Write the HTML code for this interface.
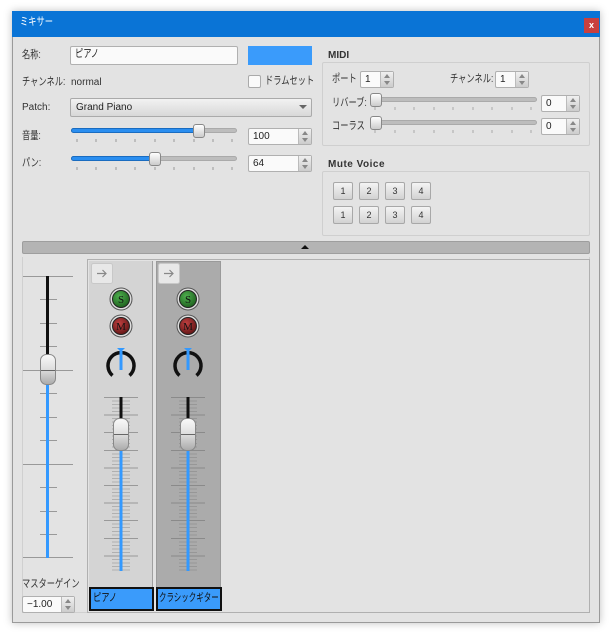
<!DOCTYPE html>
<html><head><meta charset="utf-8"><style>
*{box-sizing:border-box;margin:0;padding:0}
body{width:613px;height:635px;background:#fff;position:relative;overflow:hidden;font-family:"Liberation Sans","Noto Sans CJK JP",sans-serif;font-size:10px;color:#222}
.a{position:absolute;white-space:nowrap}
.j{display:inline-block;transform:scaleX(.75);transform-origin:left center;font-size:11px;line-height:13px}
.win{left:12px;top:11px;width:588px;height:612px;background:#e3e3e3;border:1px solid #9a9a9a;box-shadow:0 0 8px rgba(0,0,0,.25)}
.title{left:12px;top:11px;width:588px;height:26px;background:#0a74d6;color:#fff;font-size:10px;padding:6px 0 0 8px}
.close{left:584px;top:18px;width:15px;height:15px;background:#c8403f;color:#fff;font-size:9px;text-align:center;line-height:14px;font-weight:bold}
.lbl{font-size:10px;color:#333;line-height:13px}
.inp{background:#fafafa;border:1px solid #b0b0b0;border-radius:2px;padding:2px 4px;font-size:10px}
.spin{background:#fafafa;border:1px solid #b0b0b0;border-radius:2px;padding:2px 4px;font-size:10px;line-height:12px}
.spin:after{content:"";position:absolute;right:0;top:0;bottom:0;width:12px;background:linear-gradient(#f0f0f0,#ccc);border-left:1px solid #bbb}
.spin i{position:absolute;right:3px;width:0;height:0;border-left:3px solid transparent;border-right:3px solid transparent;z-index:2}
.spin i.u{top:2px;border-bottom:4px solid #888}
.spin i.d{bottom:2px;border-top:4px solid #888}
.track{height:5px;background:#bdbdbd;border-radius:3px;border:1px solid #aaa}
.fill{height:5px;background:#2a8ef0;border-radius:3px;border:1px solid #1a6cc0}
.thumb{width:12px;height:14px;background:linear-gradient(#fff,#ccc);border:1px solid #888;border-radius:3px}
.grp{border:1px solid #cfcfcf;border-radius:2px}
.btn{width:20px;height:18px;background:linear-gradient(#f4f4f4,#d2d2d2);border:1px solid #a8a8a8;border-radius:2px;text-align:center;line-height:16px;font-size:9px;color:#333}
.h{font-weight:bold;font-size:10px;color:#333}
.maj{height:174px;background:repeating-linear-gradient(to bottom,#999 0,#999 1px,transparent 1px,transparent 17.6px)}
.min{height:174px;background:repeating-linear-gradient(to bottom,#b0b0b0 0,#b0b0b0 1px,transparent 1px,transparent 3.52px)}
.maj2{height:174px;background:repeating-linear-gradient(to bottom,#8a8a8a 0,#8a8a8a 1px,transparent 1px,transparent 17.6px)}
.min2{height:174px;background:repeating-linear-gradient(to bottom,#979797 0,#979797 1px,transparent 1px,transparent 3.52px)}
</style></head><body>
<div class="a win"></div>
<div class="a title" style="padding-top:5px"><span class="j">ミキサー</span></div>
<div class="a close">x</div>

<div class="a lbl" style="left:22px;top:49px"><span class="j">名称:</span></div>
<div class="a inp" style="left:70px;top:46px;width:168px;height:19px;padding-top:1px"><span class="j">ピアノ</span></div>
<div class="a" style="left:248px;top:46px;width:64px;height:19px;background:#3a9bfb"></div>
<div class="a lbl" style="left:22px;top:76px"><span class="j">チャンネル:</span></div>
<div class="a lbl" style="left:71px;top:76px">normal</div>
<div class="a" style="left:248px;top:75px;width:13px;height:13px;background:#fafafa;border:1px solid #aaa;border-radius:2px"></div>
<div class="a lbl" style="left:265px;top:75px"><span class="j">ドラムセット</span></div>
<div class="a lbl" style="left:22px;top:101px">Patch:</div>
<div class="a" style="left:70px;top:98px;width:242px;height:19px;background:linear-gradient(#f2f2f2,#d8d8d8);border:1px solid #aaa;border-radius:2px;padding:3px 5px;font-size:10px">Grand Piano</div>
<div class="a" style="left:299px;top:105px;border-left:4px solid transparent;border-right:4px solid transparent;border-top:4px solid #666"></div>

<div class="a lbl" style="left:22px;top:130px"><span class="j">音量:</span></div>
<div class="a track" style="left:71px;top:128px;width:166px"></div>
<div class="a fill" style="left:71px;top:128px;width:130px"></div>
<div class="a thumb" style="left:193px;top:124px"></div>
<svg class="a" style="left:70px;top:138px" width="170" height="8"><g stroke="#999"><line x1="7" y1="1" x2="7" y2="4"/><line x1="26" y1="1" x2="26" y2="4"/><line x1="46" y1="1" x2="46" y2="4"/><line x1="65" y1="1" x2="65" y2="4"/><line x1="85" y1="1" x2="85" y2="4"/><line x1="104" y1="1" x2="104" y2="4"/><line x1="124" y1="1" x2="124" y2="4"/><line x1="143" y1="1" x2="143" y2="4"/><line x1="162" y1="1" x2="162" y2="4"/></g></svg>
<div class="a spin" style="left:248px;top:128px;width:64px;height:17px">100<i class="u"></i><i class="d"></i></div>

<div class="a lbl" style="left:22px;top:157px"><span class="j">パン:</span></div>
<div class="a track" style="left:71px;top:156px;width:166px"></div>
<div class="a fill" style="left:71px;top:156px;width:86px"></div>
<div class="a thumb" style="left:149px;top:152px"></div>
<svg class="a" style="left:70px;top:166px" width="170" height="8"><g stroke="#999"><line x1="7" y1="1" x2="7" y2="4"/><line x1="26" y1="1" x2="26" y2="4"/><line x1="46" y1="1" x2="46" y2="4"/><line x1="65" y1="1" x2="65" y2="4"/><line x1="85" y1="1" x2="85" y2="4"/><line x1="104" y1="1" x2="104" y2="4"/><line x1="124" y1="1" x2="124" y2="4"/><line x1="143" y1="1" x2="143" y2="4"/><line x1="162" y1="1" x2="162" y2="4"/></g></svg>
<div class="a spin" style="left:248px;top:155px;width:64px;height:17px">64<i class="u"></i><i class="d"></i></div>

<!-- MIDI -->
<div class="a grp" style="left:322px;top:62px;width:268px;height:84px"></div>
<div class="a h" style="left:328px;top:50px;background:#e3e3e3;padding-right:6px">MIDI</div>
<div class="a lbl" style="left:332px;top:73px"><span class="j">ポート</span></div>
<div class="a spin" style="left:360px;top:71px;width:34px;height:17px">1<i class="u"></i><i class="d"></i></div>
<div class="a lbl" style="left:450px;top:73px"><span class="j">チャンネル:</span></div>
<div class="a spin" style="left:495px;top:71px;width:34px;height:17px">1<i class="u"></i><i class="d"></i></div>
<div class="a lbl" style="left:332px;top:97px"><span class="j">リバーブ:</span></div>
<div class="a track" style="left:371px;top:97px;width:166px"></div>
<div class="a thumb" style="left:370px;top:93px"></div>
<svg class="a" style="left:370px;top:106px" width="170" height="6"><g stroke="#aaa"><line x1="5" y1="1" x2="5" y2="4"/><line x1="25" y1="1" x2="25" y2="4"/><line x1="44" y1="1" x2="44" y2="4"/><line x1="64" y1="1" x2="64" y2="4"/><line x1="83" y1="1" x2="83" y2="4"/><line x1="103" y1="1" x2="103" y2="4"/><line x1="122" y1="1" x2="122" y2="4"/><line x1="142" y1="1" x2="142" y2="4"/><line x1="161" y1="1" x2="161" y2="4"/></g></svg>
<div class="a spin" style="left:541px;top:95px;width:39px;height:17px">0<i class="u"></i><i class="d"></i></div>
<div class="a lbl" style="left:332px;top:120px"><span class="j">コーラス</span></div>
<div class="a track" style="left:371px;top:120px;width:166px"></div>
<div class="a thumb" style="left:370px;top:116px"></div>
<svg class="a" style="left:370px;top:129px" width="170" height="6"><g stroke="#aaa"><line x1="5" y1="1" x2="5" y2="4"/><line x1="25" y1="1" x2="25" y2="4"/><line x1="44" y1="1" x2="44" y2="4"/><line x1="64" y1="1" x2="64" y2="4"/><line x1="83" y1="1" x2="83" y2="4"/><line x1="103" y1="1" x2="103" y2="4"/><line x1="122" y1="1" x2="122" y2="4"/><line x1="142" y1="1" x2="142" y2="4"/><line x1="161" y1="1" x2="161" y2="4"/></g></svg>
<div class="a spin" style="left:541px;top:118px;width:39px;height:17px">0<i class="u"></i><i class="d"></i></div>

<!-- Mute voice -->
<div class="a grp" style="left:322px;top:171px;width:268px;height:65px"></div>
<div class="a h" style="left:328px;top:159px;background:#e3e3e3;padding-right:6px;letter-spacing:.5px">Mute Voice</div>
<div class="a btn" style="left:333px;top:182px">1</div><div class="a btn" style="left:359px;top:182px">2</div><div class="a btn" style="left:385px;top:182px">3</div><div class="a btn" style="left:411px;top:182px">4</div>
<div class="a btn" style="left:333px;top:206px">1</div><div class="a btn" style="left:359px;top:206px">2</div><div class="a btn" style="left:385px;top:206px">3</div><div class="a btn" style="left:411px;top:206px">4</div>

<div class="a" style="left:22px;top:241px;width:568px;height:13px;background:#b4b4b4;border:1px solid #9e9e9e;border-radius:2px"></div>
<div class="a" style="left:301px;top:245px;border-left:4px solid transparent;border-right:4px solid transparent;border-bottom:4px solid #111"></div>

<div class="a" style="left:22px;top:257px;width:568px;height:356px;border:1px solid #d0d0d0;border-top:none"></div>

<!-- master fader -->
<svg class="a" style="left:20px;top:270px" width="60" height="295">
<defs><linearGradient id="tg" x1="0" x2="0" y1="0" y2="1"><stop offset="0" stop-color="#fafafa"/><stop offset=".5" stop-color="#ddd"/><stop offset="1" stop-color="#aaa"/></linearGradient></defs>
<g stroke="#999" stroke-width="1">
<line x1="3" y1="6.5" x2="53" y2="6.5"/><line x1="20" y1="29.5" x2="37" y2="29.5"/><line x1="20" y1="53.5" x2="37" y2="53.5"/><line x1="20" y1="76.5" x2="37" y2="76.5"/>
<line x1="3" y1="100.5" x2="53" y2="100.5"/><line x1="20" y1="123.5" x2="37" y2="123.5"/><line x1="20" y1="147.5" x2="37" y2="147.5"/><line x1="20" y1="170.5" x2="37" y2="170.5"/>
<line x1="3" y1="194.5" x2="53" y2="194.5"/><line x1="20" y1="217.5" x2="37" y2="217.5"/><line x1="20" y1="241.5" x2="37" y2="241.5"/><line x1="20" y1="264.5" x2="37" y2="264.5"/>
<line x1="3" y1="287.5" x2="53" y2="287.5"/></g>
<rect x="26" y="6" width="3" height="100" fill="#111"/>
<rect x="26" y="106" width="3" height="182" fill="#3399ff"/>
<rect x="20.5" y="84.5" width="15" height="30" rx="6" fill="url(#tg)" stroke="#888"/>
<line x1="21" y1="100.5" x2="35" y2="100.5" stroke="#666"/>
</svg>
<div class="a lbl" style="left:22px;top:578px"><span class="j">マスターゲイン</span></div>
<div class="a spin" style="left:22px;top:596px;width:53px;height:17px">−1.00<i class="u"></i><i class="d"></i></div>

<!-- strips -->
<div class="a" style="left:87px;top:259px;width:503px;height:354px;border:1px solid #b0b0b0;background:#e3e3e3"></div>
<div class="a" style="left:89px;top:261px;width:64px;height:350px;background:#d4d4d4;border-right:1px solid #a0a0a0"></div>
<div class="a" style="left:156px;top:261px;width:65px;height:350px;background:#ababab;border:1px solid #9a9a9a"></div>

<div class="a min" style="left:112px;top:397px;width:18px"></div>
<div class="a maj" style="left:104px;top:397px;width:34px"></div>
<div class="a min2" style="left:179px;top:397px;width:18px"></div>
<div class="a maj2" style="left:171px;top:397px;width:34px"></div>

<svg class="a" style="left:88px;top:260px" width="136" height="352">
<defs>
<linearGradient id="tg2" x1="0" x2="0" y1="0" y2="1"><stop offset="0" stop-color="#fafafa"/><stop offset=".5" stop-color="#ddd"/><stop offset="1" stop-color="#aaa"/></linearGradient>
<radialGradient id="gs" cx=".4" cy=".35" r=".7"><stop offset="0" stop-color="#4fb04f"/><stop offset="1" stop-color="#1d5f1d"/></radialGradient>
<radialGradient id="rs" cx=".4" cy=".35" r=".7"><stop offset="0" stop-color="#c04040"/><stop offset="1" stop-color="#5e1414"/></radialGradient>
</defs>
<g id="st">
<rect x="3.5" y="3.5" width="21" height="20" rx="2" fill="#e8e8e8" stroke="#c8c8c8"/>
<path d="M9 13.5h9M14.5 10l3.5 3.5-3.5 3.5" stroke="#888" fill="none" stroke-width="1.2"/>
<circle cx="33" cy="39" r="11" fill="#ddd" stroke="#555"/><circle cx="33" cy="39" r="8.5" fill="url(#gs)" stroke="#222"/>
<text x="33" y="43" font-family="Liberation Serif,serif" font-size="11" text-anchor="middle" fill="#111">S</text>
<circle cx="33" cy="66" r="11" fill="#ddd" stroke="#555"/><circle cx="33" cy="66" r="8.5" fill="url(#rs)" stroke="#222"/>
<text x="33" y="70" font-family="Liberation Serif,serif" font-size="11" text-anchor="middle" fill="#111">M</text>
<path d="M24.5 115.5A13 13 0 1 1 41.5 115.5" stroke="#111" stroke-width="3.5" fill="none"/>
<rect x="31.5" y="91" width="3" height="19" fill="#3399ff"/><path d="M29 88h8l-4 4z" fill="#3399ff"/>
<rect x="31.5" y="137" width="3" height="25" fill="#111"/>
<rect x="31.5" y="188" width="3" height="123" fill="#3399ff"/>
<rect x="25.5" y="158.5" width="15" height="32" rx="6" fill="url(#tg2)" stroke="#888"/>
<line x1="26" y1="174.5" x2="40" y2="174.5" stroke="#666"/>
</g>
<use href="#st" x="67"/>
</svg>
<div class="a" style="left:89px;top:587px;width:65px;height:24px;background:#3a9bfb;border:2px solid #111;padding:3px 2px;color:#111"><span class="j">ピアノ</span></div>
<div class="a" style="left:156px;top:587px;width:66px;height:24px;background:#3a9bfb;border:2px solid #111;padding:3px 1px;color:#111;overflow:hidden"><span class="j" style="transform:scaleX(.68)">クラシックギター</span></div>
</body></html>
